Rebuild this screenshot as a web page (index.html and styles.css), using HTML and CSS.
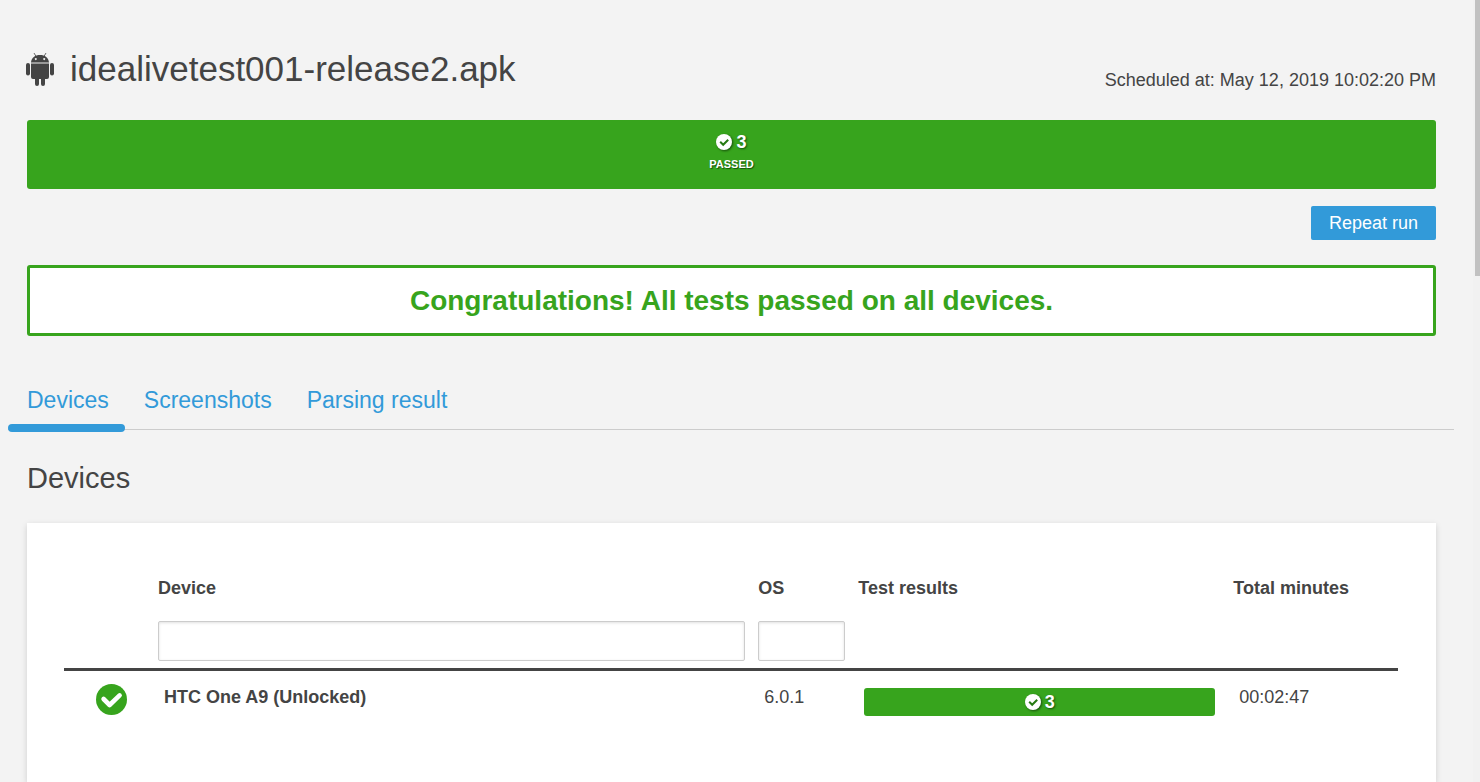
FILE: index.html
```
<!DOCTYPE html>
<html lang="en">
<head>
<meta charset="utf-8">
<title>idealivetest001-release2.apk</title>
<link rel="stylesheet" href="styles.css">
</head>
<body class="app">
<svg class="defs" aria-hidden="true">
  <symbol id="check-small" viewBox="0 0 16 16">
    <circle cx="8" cy="8" r="8" fill="#ffffff"/>
    <path d="M4.200 7.800l3 3l5-5" fill="none" stroke="#267a12" stroke-width="2"/>
  </symbol>
  <symbol id="check-large" viewBox="0 0 31 31">
    <circle cx="15.500" cy="15.500" r="15.500" fill="#37a41d"/>
    <path d="M7.600 15l6 6l10-9.600" fill="none" stroke="#ffffff" stroke-width="4.600" stroke-linecap="round" stroke-linejoin="round"/>
  </symbol>
</svg>
<main class="page">
  <header class="header">
    <h1 class="title">
      <svg class="android" viewBox="0 0 28 34" fill="currentColor" aria-hidden="true">
        <path d="M8 1l2.400 4M20 1l-2.400 4" fill="none" stroke="currentColor" stroke-width="0.8"/>
        <path fill-rule="evenodd" d="M5 10.500C5.500 5.500 9 3 14 3s8.500 2.500 9 7.500zM9.800 6a1 1 0 1 0 .01 0zM18.200 6a1 1 0 1 0 .01 0z"/>
        <path fill="#999999" d="M5 10h18v2H5z"/>
        <path d="M5 12h18v13a2 2 0 0 1-2 2h-2v5a2 2 0 0 1-4 0v-5h-2v5a2 2 0 0 1-4 0v-5H7a2 2 0 0 1-2-2z"/>
        <rect x="0" y="11" width="4" height="12.500" rx="2"/>
        <rect x="24" y="11" width="4" height="12.500" rx="2"/>
      </svg>
      <span>idealivetest001-release2.apk</span>
    </h1>
    <p class="scheduled">Scheduled at: May 12, 2019 10:02:20 PM</p>
  </header>

  <section class="summary">
    <div class="count"><svg class="check" aria-hidden="true"><use href="#check-small"/></svg>3</div>
    <div class="summary-label">PASSED</div>
  </section>

  <div class="actions"><button class="button" type="button">Repeat run</button></div>

  <p class="banner">Congratulations! All tests passed on all devices.</p>

  <nav class="tabs">
    <a class="tab tab-active" href="#devices">Devices</a>
    <a class="tab" href="#screenshots">Screenshots</a>
    <a class="tab" href="#parsing">Parsing result</a>
  </nav>

  <h2 class="section-title" id="devices">Devices</h2>
  <section class="card">
    <table class="table">
      <colgroup>
        <col class="col-status"><col class="col-device"><col class="col-os"><col class="col-results"><col>
      </colgroup>
      <thead>
        <tr>
          <th></th>
          <th><label class="head" for="device">Device</label><input class="filter" id="device" type="text"></th>
          <th><label class="head" for="os">OS</label><input class="filter" id="os" type="text"></th>
          <th><span class="head">Test results</span></th>
          <th><span class="head">Total minutes</span></th>
        </tr>
      </thead>
      <tbody>
        <tr>
          <td class="status"><svg class="status-icon" role="img" aria-label="Passed"><use href="#check-large"/></svg></td>
          <td class="device">HTC One A9 (Unlocked)</td>
          <td>6.0.1</td>
          <td><div class="result count"><svg class="check" aria-hidden="true"><use href="#check-small"/></svg>3</div></td>
          <td>00:02:47</td>
        </tr>
      </tbody>
    </table>
  </section>
</main>
<div class="scroll-track" aria-hidden="true"><div class="scroll-thumb"></div></div>
</body>
</html>
```
FILE: styles.css
```
* { box-sizing: border-box; }

.app {
  display: flex;
  height: 100vh;
  margin: 0;
  overflow: hidden;
  background: #f3f3f3;
  color: #444444;
  font: 18px/24px "Liberation Sans", Arial, sans-serif;
}

.defs { display: none; }

.page {
  display: flex;
  flex: 1;
  flex-direction: column;
  min-width: 0;
  padding: 47px 37px 0 27px;
}

.header {
  display: flex;
  align-items: flex-end;
  justify-content: space-between;
}

.title {
  display: flex;
  align-items: center;
  gap: 16px;
  margin: 0 0 1px -1px;
  font-size: 35px;
  font-weight: 400;
  line-height: 44px;
}

.android { width: 28px; height: 34px; }

.scheduled { margin: 0; }

.summary {
  display: flex;
  flex-direction: column;
  align-items: center;
  margin-top: 28px;
  padding: 10px 0 15px;
  border-radius: 3px;
  background: #37a41d;
}

.count {
  display: flex;
  align-items: center;
  justify-content: center;
  gap: 4px;
  color: #ffffff;
  font-weight: 700;
  text-shadow: 1px 1px 2px #174f0a;
}

.check {
  width: 16px;
  height: 16px;
  filter: drop-shadow(1px 1px 1px #174f0a);
}

.summary-label {
  color: #ffffff;
  font-size: 11px;
  font-weight: 700;
  line-height: 20px;
  text-shadow: 1px 1px 1px #174f0a;
}

.actions {
  display: flex;
  justify-content: flex-end;
  margin-top: 17px;
}

.button {
  height: 34px;
  padding: 0 18px;
  border: 0;
  border-radius: 2px;
  background: #329ad9;
  color: #ffffff;
  font: inherit;
}

.banner {
  margin: 25px 0 0;
  padding: 16px;
  border: 3px solid #37a41d;
  border-radius: 3px;
  background: #ffffff;
  color: #37a41d;
  font-size: 28px;
  font-weight: 700;
  line-height: 33px;
  text-align: center;
}

.tabs {
  display: flex;
  height: 62px;
  margin: 32px -18px 0 -19px;
  border-bottom: 1px solid #cccccc;
}

.tab {
  height: 64px;
  padding: 18px 16px 0 19px;
  color: #329ad9;
  font-size: 23px;
  line-height: 28px;
  text-decoration: none;
}

.tab-active::after {
  display: block;
  height: 8px;
  margin: 10px -16px 0 -19px;
  border-radius: 4px;
  background: #329ad9;
  content: "";
}

.section-title {
  margin: 30px 0 27px;
  font-size: 29px;
  font-weight: 400;
  line-height: 36px;
}

.card {
  flex: 1;
  padding: 48px 38px 0 37px;
  background: #ffffff;
  box-shadow: 0 2px 6px #00000026;
}

.table {
  width: 100%;
  border-collapse: collapse;
  table-layout: fixed;
}

.col-status { width: 88px; }
.col-device { width: 45%; }
.col-os { width: 100px; }
.col-results { width: 375px; }

.table th {
  padding: 5px 7px 7px 6px;
  border-bottom: 3px solid #444444;
  text-align: left;
  vertical-align: top;
}

.table td {
  padding: 14px 12px;
  vertical-align: top;
}

.head { display: block; }

.filter {
  display: block;
  width: 100%;
  height: 40px;
  margin-top: 21px;
  padding: 0 10px;
  border: 1px solid #cccccc;
  border-radius: 2px;
  background: #ffffff;
  box-shadow: inset 0 1px 3px #0000001f;
  font: inherit;
}

.table .status { padding: 13px 6px 0 32px; }

.status-icon {
  display: block;
  width: 31px;
  height: 31px;
}

.device { font-weight: 700; }

.result {
  height: 28px;
  margin-top: 3px;
  border-radius: 3px;
  background: #37a41d;
}

.scroll-track {
  width: 7px;
  padding-left: 2px;
  background: #f1f1f1;
}

.scroll-thumb {
  height: 276px;
  background: #c1c1c1;
}
```
